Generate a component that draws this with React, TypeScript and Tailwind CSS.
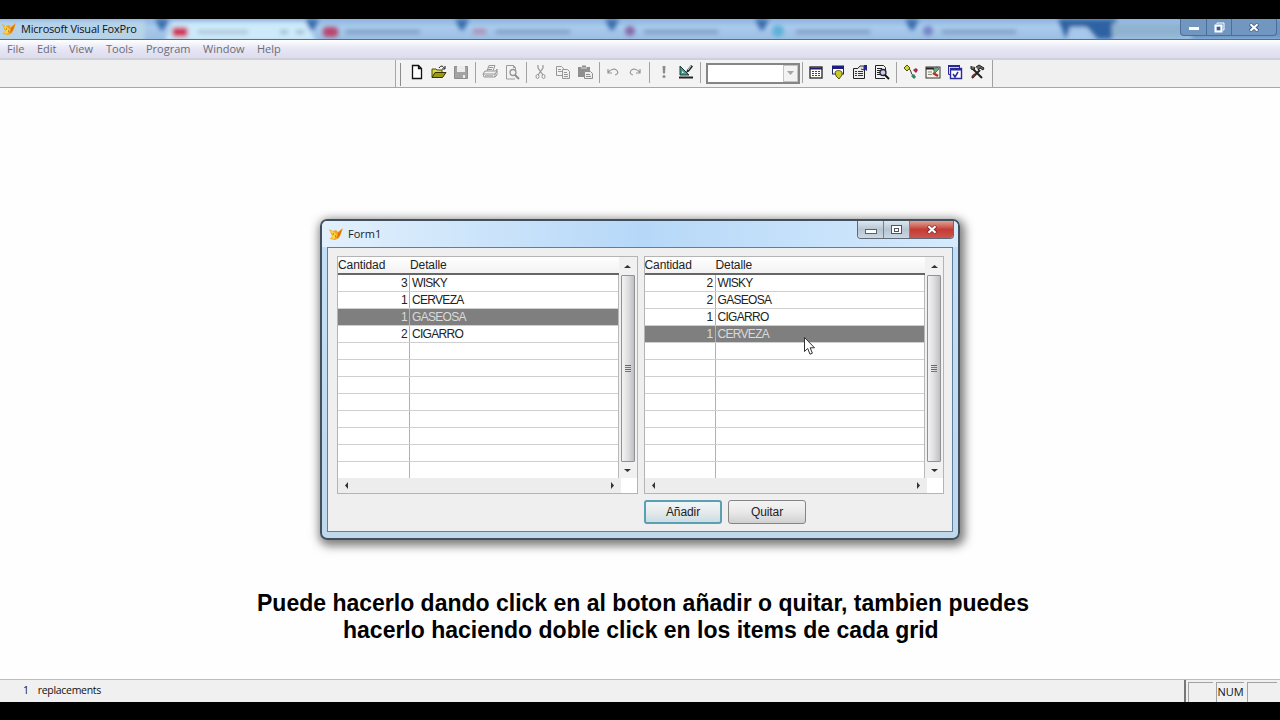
import type { ReactNode } from "react";

type Row = { qty: number; name: string };

const leftRows: Row[] = [
  { qty: 3, name: "WISKY" },
  { qty: 1, name: "CERVEZA" },
  { qty: 1, name: "GASEOSA" },
  { qty: 2, name: "CIGARRO" },
];

const rightRows: Row[] = [
  { qty: 2, name: "WISKY" },
  { qty: 2, name: "GASEOSA" },
  { qty: 1, name: "CIGARRO" },
  { qty: 1, name: "CERVEZA" },
];

const menu = [
  { label: "File", width: "w-[30px]" },
  { label: "Edit", width: "w-8" },
  { label: "View", width: "w-[37px]" },
  { label: "Tools", width: "w-10" },
  { label: "Program", width: "w-[57px]" },
  { label: "Window", width: "w-[54px]" },
  { label: "Help", width: "w-8" },
];

function Fox({ size }: { size: number }) {
  return (
    <svg width={size} height={size} viewBox="0 0 14 14">
      <path d="M0 2 4 4 7 3 9 5 14 1 12 7 10 11 6 13 1 12 3 9Z" fill="#f2a51e" />
      <path d="M1 3 5 5 8 8 5 12 2 11 4 8Z" fill="#fbd44a" />
      <path d="M9 6 13 2 11 8 8 12Z" fill="#d9720f" />
      <path d="M4 7h1M6 9h1" stroke="#8a4a08" />
    </svg>
  );
}

function Icon({ children }: { children: ReactNode }) {
  return (
    <span className="flex w-[22px] justify-center">
      <svg width="16" height="16" viewBox="0 0 16 16" fill="none">
        {children}
      </svg>
    </span>
  );
}

function Sep({ wide = "w-[7px]" }: { wide?: string }) {
  return (
    <span className={`flex h-[21px] justify-center ${wide}`}>
      <span className="w-px bg-[#a3a3a3]" />
    </span>
  );
}

// blurred browser tabs seen through the glass title bar
function Glass() {
  return (
    <svg className="absolute inset-0" width="1280" height="20" viewBox="0 0 1280 20" preserveAspectRatio="none">
      <defs>
        <linearGradient id="glass" x1="0" y1="0" x2="0" y2="1">
          <stop offset="0" stopColor="#8db4e0" />
          <stop offset="0.4" stopColor="#a9caec" />
          <stop offset="1" stopColor="#9cbfe3" />
        </linearGradient>
        <filter id="soft" x="-20%" y="-50%" width="140%" height="200%">
          <feGaussianBlur stdDeviation="2" />
        </filter>
      </defs>
      <rect width="1280" height="20" fill="url(#glass)" />
      <g filter="url(#soft)">
        <rect x="-5" y="2" width="150" height="20" fill="#b7d3e8" />
        <path d="M165 22 172 3H305L316 22Z" fill="#cdeafa" />
        {[162, 312, 462, 612, 762, 912].map((x) => (
          <path key={x} d={`M${x - 7} 0h14l-5 11h-4Z`} fill="#3c6fae" />
        ))}
        <rect x="172" y="8" width="16" height="10" rx="4" fill="#d2345c" />
        <rect x="323" y="8" width="15" height="10" rx="4" fill="#b8476f" />
        <rect x="473" y="10" width="13" height="5" fill="#b08fb4" />
        <circle cx="630" cy="12" r="5" fill="#8769a8" />
        <circle cx="778" cy="12" r="6" fill="#5fb1d9" />
        <circle cx="928" cy="12" r="5" fill="#7484c6" />
        <rect x="198" y="11" width="50" height="4" fill="#a9c4d8" />
        <rect x="280" y="11" width="8" height="4" fill="#9dbbd0" />
        <rect x="296" y="11" width="8" height="4" fill="#9dbbd0" />
        {[346, 496, 644, 796, 942].map((x) => (
          <rect key={x} x={x} y="11" width="74" height="4" fill="#7f9fc4" />
        ))}
        <path d="M1058 0H1117L1112 20H1098L1088 9H1070L1066 20Z" fill="#2f63a3" />
        <path d="M1070 8h16l6 14h-24Z" fill="#a6c8ea" />
        <rect x="1112" y="4" width="80" height="14" fill="#8fb2d0" />
        <rect x="1192" y="0" width="95" height="20" fill="#6b94c2" />
      </g>
    </svg>
  );
}

function TitleBar() {
  return (
    <div className="relative flex h-[21px] overflow-hidden border-b border-[#54708c]">
      <Glass />
      <div className="relative flex flex-1 items-center gap-[5px] pl-[2px]">
        <Fox size={14} />
        <span className="font-['Open_Sans'] text-[11px] tracking-[-0.2px] text-[#111]">Microsoft Visual FoxPro</span>
      </div>
      <div className="relative mr-[3px] flex h-[17px] rounded-b border border-t-0 border-[#4b6d97] bg-[#7196c0]">
        <span className="flex w-[26px] items-end justify-center border-r border-[#4b6d97] pb-[5px]">
          <span className="h-[3px] w-[10px] bg-white" />
        </span>
        <span className="flex w-[25px] items-center justify-center border-r border-[#4b6d97]">
          <svg width="11" height="11" viewBox="0 0 11 11" fill="none">
            <path d="M3 2V1h7v7H9" stroke="#fff" />
            <rect x="1.5" y="3.5" width="6" height="6" stroke="#fff" strokeWidth="2" />
            <rect x="3" y="5" width="3" height="3" fill="#4b5c75" />
          </svg>
        </span>
        <span className="flex w-[44px] items-center justify-center">
          <svg width="10" height="9" viewBox="0 0 10 9">
            <path d="M1 1 9 8M9 1 1 8" stroke="#34527c" strokeWidth="3.6" />
            <path d="M1.5 1.2 8.5 7.8M8.5 1.2 1.5 7.8" stroke="#fff" strokeWidth="2.2" />
          </svg>
        </span>
      </div>
    </div>
  );
}

function ToolBar() {
  return (
    <div className="flex h-[28px] items-start border-b border-[#a7a7a7] bg-[#f0f0f0]">
      <div className="h-full w-[396px] border-r border-[#a7a7a7]" />
      <div className="flex h-full w-[597px] items-center border-r border-[#a0a0a0] bg-[#f3f3f3] pb-[3px] pl-1">
        <span className="mr-[5px] mt-1 h-[23px] w-px bg-[#8c8c8c]" />
        <Icon>
          <path d="M3.5 1.5h6l3 3v10h-9ZM9.5 1.5v3h3" fill="#fff" stroke="#111" strokeWidth="1.3" />
        </Icon>
        <Icon>
          <path d="M1 13V5h4l1 1h5v3" fill="#d8d848" stroke="#4c4c08" />
          <path d="M1 13.5 4 8.5h11l-3.5 5Z" fill="#9b9b10" stroke="#333305" />
          <path d="M8 4c2-3 4-2 5 0M14 2v3h-3" stroke="#111" />
        </Icon>
        <Icon>
          <path d="M1.5 2.5h13v12h-13Z" fill="#a3a3a3" stroke="#8c8c8c" />
          <path d="M4 2h8v6H4ZM10 11h2v3h-2Z" fill="#ececec" />
        </Icon>
        <Sep />
        <Icon>
          <path d="M5 7 7 1.5h6L11 7M3 7h11l1-2v6l-2 2H2l-1-3ZM1 10h12v3M13 10l2-3M7 3.500h4M6 5.500h4" stroke="#969696" />
          <path d="M3 11h8v2H3Z" fill="#b9b9b9" />
        </Icon>
        <Icon>
          <path d="M11 15H2.500V1.500h7l2 2V6M9.500 1.500v2h2" stroke="#9b9b9b" />
          <circle cx="9" cy="8.500" r="3" stroke="#969696" strokeWidth="1.300" />
          <path d="m11 11 4 4" stroke="#8e8e8e" strokeWidth="2" />
        </Icon>
        <Sep />
        <Icon>
          <path d="M5 1v3l5 7M10 1v3L5 11" stroke="#969696" strokeWidth="1.200" />
          <ellipse cx="4.500" cy="12.500" rx="1.500" ry="2" stroke="#969696" />
          <ellipse cx="10.500" cy="12.500" rx="1.500" ry="2" stroke="#969696" />
        </Icon>
        <Icon>
          <path d="M1.500 2.500h5l2 2v7h-7ZM3 5.500h3M3 7.500h4" stroke="#969696" />
          <path d="M7.500 5.500h5l2 2v7h-7Z" fill="#f0f0f0" stroke="#969696" />
          <path d="M9 8.500h3M9 10.500h4M9 12.500h4" stroke="#969696" />
        </Icon>
        <Icon>
          <path d="M1 3h4V1.500h4V3h4v10H1Z" fill="#8f8f8f" />
          <path d="M4 4h6" stroke="#ddd" />
          <path d="M7.500 7.500h6l2 2v5h-8Z" fill="#ededed" stroke="#8f8f8f" />
          <path d="M9 10.500h4M9 12.500h5" stroke="#8f8f8f" />
        </Icon>
        <Sep wide="w-[6px]" />
        <Icon>
          <path d="M3 5v4h4M3 8.500C6 5 10 4 12 6.500s0 4-2 4.500" stroke="#969696" strokeWidth="1.200" />
        </Icon>
        <Icon>
          <path d="M13 5v4H9M13 8.500C10 5 6 4 4 6.500s0 4 2 4.500" stroke="#969696" strokeWidth="1.200" />
        </Icon>
        <Sep />
        <Icon>
          <path d="M6.500 2h3L9 9.500H7Z" fill="#8d8d8d" />
          <circle cx="8" cy="12.500" r="1.500" fill="#8d8d8d" />
        </Icon>
        <Icon>
          <path d="M2 2v9h9Z" fill="#4b9a8c" stroke="#123f38" />
          <path d="M4 7v2h2Z" fill="#fff" />
          <path d="M1 12.500h14v2H1Z" fill="#222" />
          <path d="m8 9 1-3 4-5 2 1.500-4 5Z" fill="#222" />
          <path d="m10 6 3-4" stroke="#ddd" />
        </Icon>
        <Sep />
        <span className="ml-[2px] mt-[2px] flex h-[21px] w-[94px] justify-end border-2 border-[#858585] bg-white">
          <span className="flex w-[15px] items-center justify-center border border-[#c4c4c4] bg-[#f3f3f3]">
            <svg width="7" height="4" viewBox="0 0 7 4">
              <path d="M0 0h7L3.500 4Z" fill="#a5a5a5" />
            </svg>
          </span>
        </span>
        <Sep wide="w-[5px]" />
        <Icon>
          <rect x="2" y="3" width="12" height="11" fill="#fff" stroke="#222" strokeWidth="1.300" />
          <path d="M2 4.500h12" stroke="#20206a" strokeWidth="2" />
          <path d="M4 7.500h8M4 9.500h8M4 11.500h8" stroke="#444" strokeDasharray="2 1" />
        </Icon>
        <Icon>
          <rect x="2.500" y="2" width="11" height="8" fill="#fff" stroke="#222260" />
          <path d="M2 3.500h12" stroke="#1c1c84" strokeWidth="3" />
          <path d="M5 8c2-2 5-2 7 0v3l-3 4-3-3Z" fill="#c9c92c" stroke="#55550b" />
        </Icon>
        <Icon>
          <path d="M1.500 4.500h11v10h-11Z" fill="#eee" stroke="#222" />
          <path d="M3 7.500h2M6 7.500h5M3 9.500h2M6 9.500h5M3 11.500h2M6 11.500h5" stroke="#333" />
          <path d="M5 5 8 2h4v4L9 5" fill="#ddd" stroke="#333" />
          <path d="M12 1h3v6l-3-2Z" fill="#24248c" />
        </Icon>
        <Icon>
          <path d="M11 14.500H1.500v-13h8l2 2v4M3 4.500h5M3 6.500h3M3 8.500h3M3 10.500h3" stroke="#222" />
          <circle cx="9" cy="8.500" r="3" fill="#ccd" stroke="#222244" strokeWidth="1.300" />
          <path d="m11 11 4 4" stroke="#111" strokeWidth="2" />
        </Icon>
        <Sep />
        <Icon>
          <path d="m1 4 3-3 3 3-3 3Z" fill="#d6d62d" stroke="#50500b" />
          <path d="M6 5c2 0 2 6 4 6" stroke="#333" />
          <path d="m10 6 3-2 2 2-2 3Z" fill="#a82543" />
          <path d="m8 12 3-2 2 3-2 2Z" fill="#2b8a62" />
        </Icon>
        <Icon>
          <rect x="1" y="3" width="14" height="11" fill="#f4f4e0" stroke="#333" />
          <path d="M1 4.500h8" stroke="#222" strokeWidth="2" />
          <path d="M3 8h4M3 10.500h4" stroke="#888" />
          <path d="m8 5 4-2 2 2-4 4Z" fill="#64a88a" stroke="#333" strokeWidth=".6" />
          <path d="m8 9 5 3" stroke="#ac302c" strokeWidth="2.500" />
        </Icon>
        <Icon>
          <path d="M1.500 1.500h11v9h-11Z" fill="#fff" stroke="#29299a" />
          <path d="M3.500 4.500h11v10h-11Z" fill="#fff" stroke="#29299a" strokeWidth="1.400" />
          <path d="M1 2h12M3 5.500h12" stroke="#29299a" strokeWidth="2" />
          <path d="m6 10 2 3 3-5" stroke="#29299a" strokeWidth="1.500" />
        </Icon>
        <Icon>
          <path d="M13 14 4 5M3 14l8-8" stroke="#222" strokeWidth="2" />
          <path d="M2 2v3l3 1 1-3M7 3l3-2 5 3-1 2-3-2-2 2" fill="#666" stroke="#222" />
          <path d="m3 13 3-3" stroke="#7b2d2d" strokeWidth="2" />
        </Icon>
      </div>
    </div>
  );
}

function Arrow({ d }: { d: string }) {
  return (
    <svg width="7" height="7" viewBox="0 0 7 7">
      <path d={d} fill="#333" />
    </svg>
  );
}

function Grid({ rows, selected, first }: { rows: Row[]; selected: number; first: string }) {
  const blanks = Array.from({ length: 12 - rows.length });
  return (
    <div className="flex h-[238px] flex-1 flex-col border border-[#b4b4b4] bg-white text-[12px] leading-none text-[#222]">
      <div className="flex flex-1">
        <div className="flex flex-1 flex-col">
          <div className="flex h-[18px] items-center border-b-2 border-[#666] bg-linear-to-b from-white to-[#f2f2f2]">
            <span className={`${first} tracking-[-0.1px]`}>Cantidad</span>
            <span className="tracking-[-0.1px]">Detalle</span>
          </div>
          <div className="flex flex-1 flex-col border-r border-[#b8b8b8]">
            {rows.map((row, i) => (
              <div
                key={row.name}
                className={`flex flex-1 border-b border-[#cfcfcf] tracking-[-0.7px] ${i === selected ? "bg-[#7f7f7f] text-[#dadada]" : ""}`}
              >
                <span className={`${first} flex items-center justify-end border-r border-[#b0b0b0] pr-[2px]`}>{row.qty}</span>
                <span className="flex items-center pl-[2px]">{row.name}</span>
              </div>
            ))}
            {blanks.map((_, i) => (
              <div key={i} className="flex flex-1 border-b border-[#cfcfcf] last:border-b-0">
                <span className={`${first} border-r border-[#b0b0b0]`} />
              </div>
            ))}
          </div>
        </div>
        <div className="flex w-[18px] flex-col items-center bg-[#f1f1f1]">
          <span className="flex h-[18px] items-center">
            <Arrow d="M0 5h7L3.500 2Z" />
          </span>
          <span className="flex w-[14px] flex-1 items-center justify-center rounded-[1px] border border-[#919191] bg-linear-to-r from-[#f3f3f3] via-[#dedee0] to-[#bfbfc4]">
            <span className="flex flex-col gap-px">
              <span className="h-px w-[6px] bg-[#666]" />
              <span className="h-px w-[6px] bg-[#777]" />
              <span className="h-px w-[6px] bg-[#666]" />
              <span className="h-px w-[6px] bg-[#777]" />
            </span>
          </span>
          <span className="flex h-[16px] items-center">
            <Arrow d="M0 2h7L3.500 5Z" />
          </span>
        </div>
      </div>
      <div className="flex h-[15px]">
        <div className="flex flex-1 items-center justify-between bg-[#ededed] px-[5px]">
          <Arrow d="M5 0v7L2 3.500Z" />
          <Arrow d="M2 0v7L5 3.500Z" />
        </div>
        <div className="w-4 bg-white" />
      </div>
    </div>
  );
}

function FormWindow() {
  return (
    <div className="absolute left-[320px] top-[131px] flex h-[321px] w-[640px] flex-col rounded-[7px] border-2 border-[#42505e] bg-linear-to-b from-[#c3dff9] to-[#c0d8ec] shadow-[2px_3px_10px_3px_rgba(0,0,0,0.5)]">
      <div className="flex h-[26px] rounded-t-[5px] bg-linear-to-r from-[#e2f0fc] via-[#b6d8f8] to-[#d5eafd]">
        <div className="flex flex-1 items-center gap-[5px] pl-[7px]">
          <Fox size={14} />
          <span className="font-['Open_Sans'] text-[11px] text-[#222]">Form1</span>
        </div>
        <div className="mr-[4px] flex h-[18px] overflow-hidden rounded-b-[4px] border border-t-0 border-[#5e6b79]">
          <span className="flex w-[26px] items-end justify-center border-r border-[#76818d] bg-linear-to-b from-[#dce6ef] via-[#b7c5d2] to-[#cbd8e3] pb-1">
            <span className="h-[5px] w-3 border border-[#59626c] bg-white" />
          </span>
          <span className="flex w-[26px] items-center justify-center border-r border-[#76818d] bg-linear-to-b from-[#dce6ef] via-[#b7c5d2] to-[#cbd8e3]">
            <span className="flex h-[9px] w-[11px] items-center justify-center border border-[#4e5761] bg-white">
              <span className="h-[4px] w-[5px] border border-[#4e5761]" />
            </span>
          </span>
          <span className="flex w-[43px] items-center justify-center bg-linear-to-b from-[#e0a096] via-[#c33b35] to-[#cf554b]">
            <svg width="10" height="9" viewBox="0 0 10 9">
              <path d="M1 1 9 8M9 1 1 8" stroke="#7c2a2a" strokeWidth="3.600" />
              <path d="M1.500 1.200 8.500 7.800M8.500 1.200 1.500 7.800" stroke="#fff" strokeWidth="2.200" />
            </svg>
          </span>
        </div>
      </div>
      <div className="mx-[5px] mb-[6px] flex flex-1 flex-col border border-[#5f7f9d] bg-[#efefef] pl-[9px] pr-[8px] pt-[8px] font-['Liberation_Sans']">
        <div className="flex gap-[6px]">
          <Grid rows={leftRows} selected={2} first="w-[72px]" />
          <Grid rows={rightRows} selected={3} first="w-[71px]" />
        </div>
        <div className="mt-[6px] flex gap-[6px] pl-[307px] text-[12px] tracking-[-0.1px] text-[#222]">
          <button className="h-6 w-[78px] rounded-[3px] border-2 border-[#5b9fb2] bg-linear-to-b from-[#f0f5f7] via-[#e6eaec] to-[#cbdde4]">
            Añadir
          </button>
          <button className="h-6 w-[78px] rounded-[3px] border border-[#858585] bg-linear-to-b from-[#f4f4f4] via-[#e9e9e9] to-[#d0d0d0]">
            Quitar
          </button>
        </div>
      </div>
    </div>
  );
}

export default function App() {
  return (
    <div className="flex h-[720px] w-[1280px] flex-col overflow-hidden bg-black pb-[18px] pt-[19px]">
      <TitleBar />
      <nav className="flex h-5 items-center border-b-2 border-[#cfcfd8] bg-linear-to-b from-white via-[#e6e6f5] to-[#dcdcee] pl-[7px] font-['Open_Sans'] text-[11px] text-[#6c6c76]">
        {menu.map((m) => (
          <span key={m.label} className={m.width}>
            {m.label}
          </span>
        ))}
      </nav>
      <ToolBar />

      <main className="relative flex-1 bg-[#fefefe]">
        <FormWindow />
        <svg className="absolute left-[803px] top-[248px]" width="13" height="20" viewBox="0 0 13 20">
          <path d="M1.500 1.500v14l3.200-3 2.300 5.700 2.400-1-2.300-5.400h4.400Z" fill="#fff" stroke="#333" />
        </svg>
        <p className="absolute left-[257px] top-[502px] w-[772px] whitespace-nowrap font-['Liberation_Sans'] text-[23px] font-bold leading-[27px] text-black">
          Puede hacerlo dando click en al boton añadir o quitar, tambien puedes
          <br />
          <span className="pl-[86px]">hacerlo haciendo doble click en los items de cada grid</span>
        </p>
      </main>

      <footer className="flex h-[23px] border-t border-[#bdbdbd] bg-[#f0f0f0] font-['Open_Sans'] text-[10.500px] text-[#111]">
        <div className="flex flex-1 items-center gap-[9px] pl-[23px] tracking-[-0.3px]">
          <span>1</span>
          <span>replacements</span>
        </div>
        <div className="flex gap-[3px] border-l-2 border-[#777] pl-[2px] pt-[2px]">
          <span className="w-[25px] border-l border-t border-[#a2a2a2]" />
          <span className="flex w-7 items-center justify-center border-l border-t border-[#a2a2a2] text-[11px]">NUM</span>
          <span className="mr-[3px] w-[30px] border-l border-t border-[#a2a2a2]" />
        </div>
      </footer>
    </div>
  );
}
